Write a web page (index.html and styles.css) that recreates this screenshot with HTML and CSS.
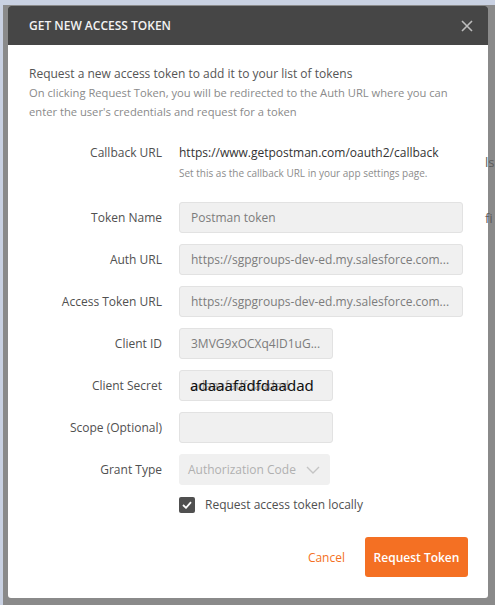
FILE: index.html
```html
<!DOCTYPE html>
<html lang="en">
<head>
    <meta charset="UTF-8">
    <meta name="viewport" content="width=device-width, initial-scale=1.0">
    <title>Get New Access Token</title>
    <link rel="stylesheet" href="styles.css">
</head>
<body>
    <div class="screen">
        <div class="backdrop">
            <span class="behind behind-ls">ls</span>
            <span class="behind behind-fi">fi</span>

            <!-- Modal -->
            <div class="modal">
                <div class="modal-header">
                    <h1>GET NEW ACCESS TOKEN</h1>
                    <svg class="close" width="12" height="12" viewBox="0 0 12 12">
                        <path d="M1 1 L11 11 M11 1 L1 11" stroke="#bdbdbd" stroke-width="1.6" fill="none"/>
                    </svg>
                </div>

                <div class="modal-body">
                    <p class="intro">Request a new access token to add it to your list of tokens</p>
                    <p class="intro-sub">On clicking Request Token, you will be redirected to the Auth URL where you can enter the user's credentials and request for a token</p>

                    <div class="form">
                        <label class="callback-label">Callback URL</label>
                        <div class="callback">
                            <div class="callback-url">https://www.getpostman.com/oauth2/callback</div>
                            <div class="hint">Set this as the callback URL in your app settings page.</div>
                        </div>

                        <label>Token Name</label>
                        <div class="field">Postman token</div>

                        <label>Auth URL</label>
                        <div class="field">https://sgpgroups-dev-ed.my.salesforce.com...</div>

                        <label>Access Token URL</label>
                        <div class="field">https://sgpgroups-dev-ed.my.salesforce.com...</div>

                        <label>Client ID</label>
                        <div class="field field-short">3MVG9xOCXq4ID1uG...</div>

                        <label>Client Secret</label>
                        <div class="field field-short secret">
                            adaaafadfdaadad
                            <span class="secret-typed">adaaafadfdaadad</span>
                        </div>

                        <label>Scope (Optional)</label>
                        <div class="field field-short"></div>

                        <label>Grant Type</label>
                        <div class="field select">
                            <span>Authorization Code</span>
                            <svg width="14" height="8" viewBox="0 0 14 8">
                                <path d="M1 1 L7 7 L13 1" stroke="#c4c4c4" stroke-width="1.4" fill="none"/>
                            </svg>
                        </div>

                        <span></span>
                        <div class="check-row">
                            <span class="checkbox">
                                <svg width="10" height="8" viewBox="0 0 10 8">
                                    <path d="M1 4 L4 6.8 L9 1.2" stroke="#fff" stroke-width="1.8" fill="none"/>
                                </svg>
                            </span>
                            Request access token locally
                        </div>
                    </div>
                </div>

                <div class="modal-footer">
                    <button class="btn-cancel">Cancel</button>
                    <button class="btn-request">Request Token</button>
                </div>
            </div>
        </div>
    </div>
</body>
</html>
```

FILE: styles.css
```css
/* Reset */
* {
    margin: 0;
    padding: 0;
    box-sizing: border-box;
}

body, html {
    font-family: "Open Sans", "Noto Sans", sans-serif;
    background-color: #c9d1e2;
    height: 100%;
    overflow: hidden;
}

.screen {
    padding: 5px 0 0 3px;
}

.backdrop {
    position: relative;
    height: 600px;
    background-color: #8a8a8a;
    padding: 1px 0 0 5px;
    overflow: hidden;
}

.behind {
    position: absolute;
    left: 482px;
    font-size: 13px;
    color: #5c5c5c;
}

.behind-ls { top: 148px; }
.behind-fi { top: 204px; }

/* Modal */
.modal {
    width: 480px;
    background-color: #fff;
    border-radius: 3px;
    overflow: hidden;
}

.modal-header {
    height: 39px;
    background-color: #464646;
    display: flex;
    align-items: center;
    justify-content: space-between;
    padding: 0 15px 0 21px;
}

.modal-header h1 {
    font-size: 12px;
    font-weight: 600;
    color: #f2f2f2;
}

.modal-body {
    padding: 20px 25px 0 21px;
}

.intro {
    font-size: 12px;
    line-height: 18px;
    color: #555;
}

.intro-sub {
    font-size: 11.2px;
    line-height: 19px;
    color: #8a8a8a;
}

/* Form */
.form {
    display: grid;
    grid-template-columns: 133px 284px;
    column-gap: 17px;
    row-gap: 11px;
    align-items: center;
    margin-top: 23px;
}

.form label {
    text-align: right;
    font-size: 12px;
    color: #505050;
}

.callback-label {
    align-self: start;
    line-height: 17px;
}

.callback-url {
    font-size: 12px;
    line-height: 17px;
    color: #333;
}

.hint {
    font-size: 10px;
    color: #8c8c8c;
    margin-top: 5px;
    margin-bottom: 11px;
}

.field {
    height: 31px;
    background-color: #f0f0f0;
    border: 1px solid #e2e2e2;
    border-radius: 3px;
    padding: 0 11px;
    display: flex;
    align-items: center;
    font-size: 12px;
    color: #7c7c7c;
    white-space: nowrap;
    overflow: hidden;
}

.field-short {
    width: 154px;
}

.secret {
    position: relative;
    color: #9a9a9a;
}

.secret-typed {
    position: absolute;
    left: 10px;
    top: 4px;
    font-family: "Noto Sans", sans-serif;
    font-size: 15px;
    color: #111;
}

.select {
    width: 151px;
    justify-content: space-between;
    padding: 0 9px 0 8px;
    color: #b0b0b0;
    border-color: #f0f0f0;
}

.check-row {
    display: flex;
    align-items: center;
    gap: 10px;
    font-size: 12px;
    color: #505050;
}

.checkbox {
    width: 16px;
    height: 16px;
    border-radius: 2px;
    background-color: #505050;
    display: flex;
    align-items: center;
    justify-content: center;
}

/* Footer */
.modal-footer {
    display: flex;
    justify-content: flex-end;
    align-items: center;
    gap: 20px;
    padding: 24px 20px 21px 0;
}

.btn-cancel {
    background: none;
    border: none;
    font-family: inherit;
    font-size: 12px;
    color: #f47023;
}

.btn-request {
    width: 103px;
    height: 40px;
    background-color: #f47023;
    border: none;
    border-radius: 3px;
    color: #fff;
    font-family: inherit;
    font-size: 12px;
    font-weight: 600;
}
```
